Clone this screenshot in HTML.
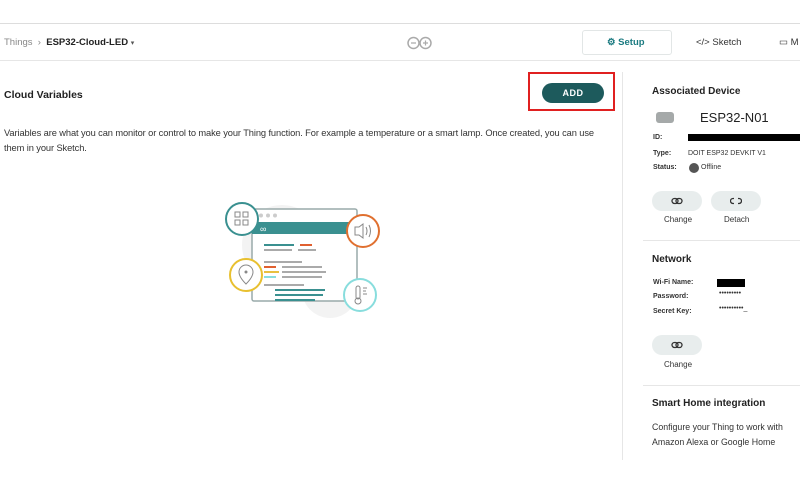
<!DOCTYPE html>
<html><head><meta charset="utf-8"><style>
*{margin:0;padding:0;box-sizing:border-box}
body{width:800px;height:500px;background:#fff;font-family:"Liberation Sans",sans-serif;color:#222;position:relative;overflow:hidden}
.a{position:absolute;white-space:nowrap}
.b{font-weight:bold}
.pill{position:absolute;background:#e8eded;border-radius:11px;width:50px;height:20px}
.lbl{font-size:8px;color:#333}
</style></head><body>
<div class="a" style="left:0;top:23px;width:800px;height:1px;background:#ddd"></div>
<div class="a" style="left:0;top:60px;width:800px;height:1px;background:#e6e6e6"></div>
<div class="a" style="left:4px;top:37px;font-size:9.5px;color:#888">Things &nbsp;›&nbsp; <span style="color:#222;font-weight:bold">ESP32-Cloud-LED</span> <span style="font-size:7px;color:#555">▾</span></div>
<svg class="a" style="left:406px;top:36px" width="28" height="14" viewBox="0 0 28 14"><circle cx="7.5" cy="7" r="5.5" fill="none" stroke="#aaa" stroke-width="1.5"/><circle cx="19.5" cy="7" r="5.5" fill="none" stroke="#aaa" stroke-width="1.5"/><path d="M5 7h5M17 7h5M19.5 4.5v5" stroke="#aaa" stroke-width="1.2"/></svg>
<div class="a" style="left:582px;top:30px;width:90px;height:25px;border:1px solid #e2e6e6;border-radius:3px"></div>
<div class="a" style="left:607px;top:37px;font-size:9.5px;color:#1a7a80;font-weight:bold">⚙ Setup</div>
<div class="a" style="left:696px;top:37px;font-size:9.5px;color:#333">&lt;/&gt; Sketch</div>
<div class="a" style="left:779px;top:37px;font-size:9.5px;color:#333">▭ M</div>
<div class="a b" style="left:4px;top:89px;font-size:10.5px">Cloud Variables</div>
<div class="a" style="left:528px;top:72px;width:87px;height:39px;border:2px solid #e02020"></div>
<div class="a b" style="left:542px;top:83px;width:62px;height:20px;border-radius:10px;background:#1d5a5c;color:#fff;font-size:9px;text-align:center;line-height:20px;letter-spacing:.5px">ADD</div>
<div class="a" style="left:4px;top:126px;font-size:9.3px;line-height:15px;color:#333;letter-spacing:-.1px">Variables are what you can monitor or control to make your Thing function. For example a temperature or a smart lamp. Once created, you can use<br>them in your Sketch.</div>
<svg class="a" style="left:220px;top:195px" width="165" height="125" viewBox="0 0 165 125">
<circle cx="62" cy="50" r="40" fill="#f3f3f3"/><circle cx="110" cy="95" r="28" fill="#f3f3f3"/>
<rect x="32" y="14" width="105" height="92" rx="2" fill="#fff" stroke="#9aa" stroke-width="1.5"/>
<rect x="32" y="27" width="105" height="12" fill="#3a9090"/>
<circle cx="41" cy="20.5" r="2" fill="#ccc"/><circle cx="48" cy="20.5" r="2" fill="#ccc"/><circle cx="55" cy="20.5" r="2" fill="#ccc"/>
<text x="40" y="37" font-size="9" fill="#fff" font-family="Liberation Sans">∞</text>
<g stroke-width="2"><path d="M44 50h30" stroke="#3a9090"/><path d="M80 50h12" stroke="#e06030"/><path d="M44 55h28M78 55h18" stroke="#aaa"/>
<path d="M44 67h38" stroke="#aaa"/><path d="M44 72h12" stroke="#e06030"/><path d="M44 77h15" stroke="#e8c040"/><path d="M44 82h12" stroke="#8dd"/><path d="M62 72h40M62 77h44M62 82h40" stroke="#aaa"/>
<path d="M44 90h40" stroke="#aaa"/><path d="M55 95h50M55 100h48M55 105h40" stroke="#3a9090"/></g>
<circle cx="22" cy="24" r="16" fill="#fff" stroke="#3a9090" stroke-width="2"/>
<rect x="15" y="17" width="5" height="5" fill="none" stroke="#888"/><rect x="23" y="17" width="5" height="5" fill="none" stroke="#888"/><rect x="15" y="25" width="5" height="5" fill="none" stroke="#888"/><rect x="23" y="25" width="5" height="5" fill="none" stroke="#888"/>
<circle cx="143" cy="36" r="16" fill="#fff" stroke="#e07030" stroke-width="2"/>
<path d="M135 32h4l4-3v14l-4-3h-4z" fill="none" stroke="#888"/><path d="M146 32q2 4 0 8M149 30q3 6 0 12" fill="none" stroke="#888"/>
<circle cx="26" cy="80" r="16" fill="#fff" stroke="#e8c030" stroke-width="2"/>
<path d="M26 89q-7-7-7-12a7 7 0 0 1 14 0q0 5-7 12z" fill="none" stroke="#888"/><circle cx="26" cy="77" r="1.5" fill="#888"/>
<circle cx="140" cy="100" r="16" fill="#fff" stroke="#8dd" stroke-width="2"/>
<rect x="136" y="91" width="4" height="13" rx="2" fill="none" stroke="#888"/><circle cx="138" cy="106" r="3" fill="none" stroke="#888"/><path d="M143 93h4M143 96h3M143 99h4" stroke="#888"/>
</svg>
<div class="a" style="left:622px;top:72px;width:1px;height:388px;background:#e6e6e6"></div>
<div class="a b" style="left:652px;top:86px;font-size:10px">Associated Device</div>
<div class="a" style="left:656px;top:112px;width:18px;height:11px;border-radius:3px;background:#a5a9a9"></div>
<div class="a" style="left:700px;top:110px;font-size:13px;color:#222">ESP32-N01</div>
<div class="a b lbl" style="left:653px;top:134px;font-size:7px">ID:</div>
<div class="a" style="left:688px;top:134px;width:112px;height:7px;background:#000"></div>
<div class="a b lbl" style="left:653px;top:150px;font-size:7px">Type:</div>
<div class="a lbl" style="left:688px;top:150px;font-size:7px">DOIT ESP32 DEVKIT V1</div>
<div class="a b lbl" style="left:653px;top:164px;font-size:7px">Status:</div>
<div class="a" style="left:689px;top:163px;width:10px;height:10px;border-radius:50%;background:#555"></div>
<div class="a lbl" style="left:701px;top:164px;font-size:7px">Offline</div>
<div class="pill" style="left:652px;top:191px"></div>
<svg class="a" style="left:671px;top:197px" width="12" height="8" viewBox="0 0 12 8"><rect x="1" y="1.5" width="6" height="5" rx="2.5" fill="none" stroke="#333" stroke-width="1.3"/><rect x="5" y="1.5" width="6" height="5" rx="2.5" fill="none" stroke="#333" stroke-width="1.3"/></svg>
<div class="pill" style="left:711px;top:191px"></div>
<svg class="a" style="left:730px;top:197px" width="12" height="8" viewBox="0 0 12 8"><path d="M4 1.5h-1a2.5 2.5 0 0 0 0 5h1M8 1.5h1a2.5 2.5 0 0 1 0 5h-1" fill="none" stroke="#333" stroke-width="1.3"/></svg>
<div class="a lbl" style="left:664px;top:215px">Change</div>
<div class="a lbl" style="left:724px;top:215px">Detach</div>
<div class="a" style="left:643px;top:240px;width:157px;height:1px;background:#e6e6e6"></div>
<div class="a b" style="left:652px;top:254px;font-size:10px">Network</div>
<div class="a b lbl" style="left:653px;top:279px;font-size:7px">Wi-Fi Name:</div>
<div class="a" style="left:717px;top:279px;width:28px;height:8px;background:#000"></div>
<div class="a b lbl" style="left:653px;top:293px;font-size:7px">Password:</div>
<div class="a lbl" style="left:719px;top:290px;font-size:7px">•••••••••</div>
<div class="a b lbl" style="left:653px;top:308px;font-size:7px">Secret Key:</div>
<div class="a lbl" style="left:719px;top:305px;font-size:7px">••••••••••_</div>
<div class="pill" style="left:652px;top:335px"></div>
<svg class="a" style="left:671px;top:341px" width="12" height="8" viewBox="0 0 12 8"><rect x="1" y="1.5" width="6" height="5" rx="2.5" fill="none" stroke="#333" stroke-width="1.3"/><rect x="5" y="1.5" width="6" height="5" rx="2.5" fill="none" stroke="#333" stroke-width="1.3"/></svg>
<div class="a lbl" style="left:664px;top:360px">Change</div>
<div class="a" style="left:643px;top:385px;width:157px;height:1px;background:#e6e6e6"></div>
<div class="a b" style="left:652px;top:398px;font-size:10px">Smart Home integration</div>
<div class="a" style="left:652px;top:420px;font-size:8.8px;line-height:15px;color:#333">Configure your Thing to work with<br>Amazon Alexa or Google Home</div>
</body></html>
